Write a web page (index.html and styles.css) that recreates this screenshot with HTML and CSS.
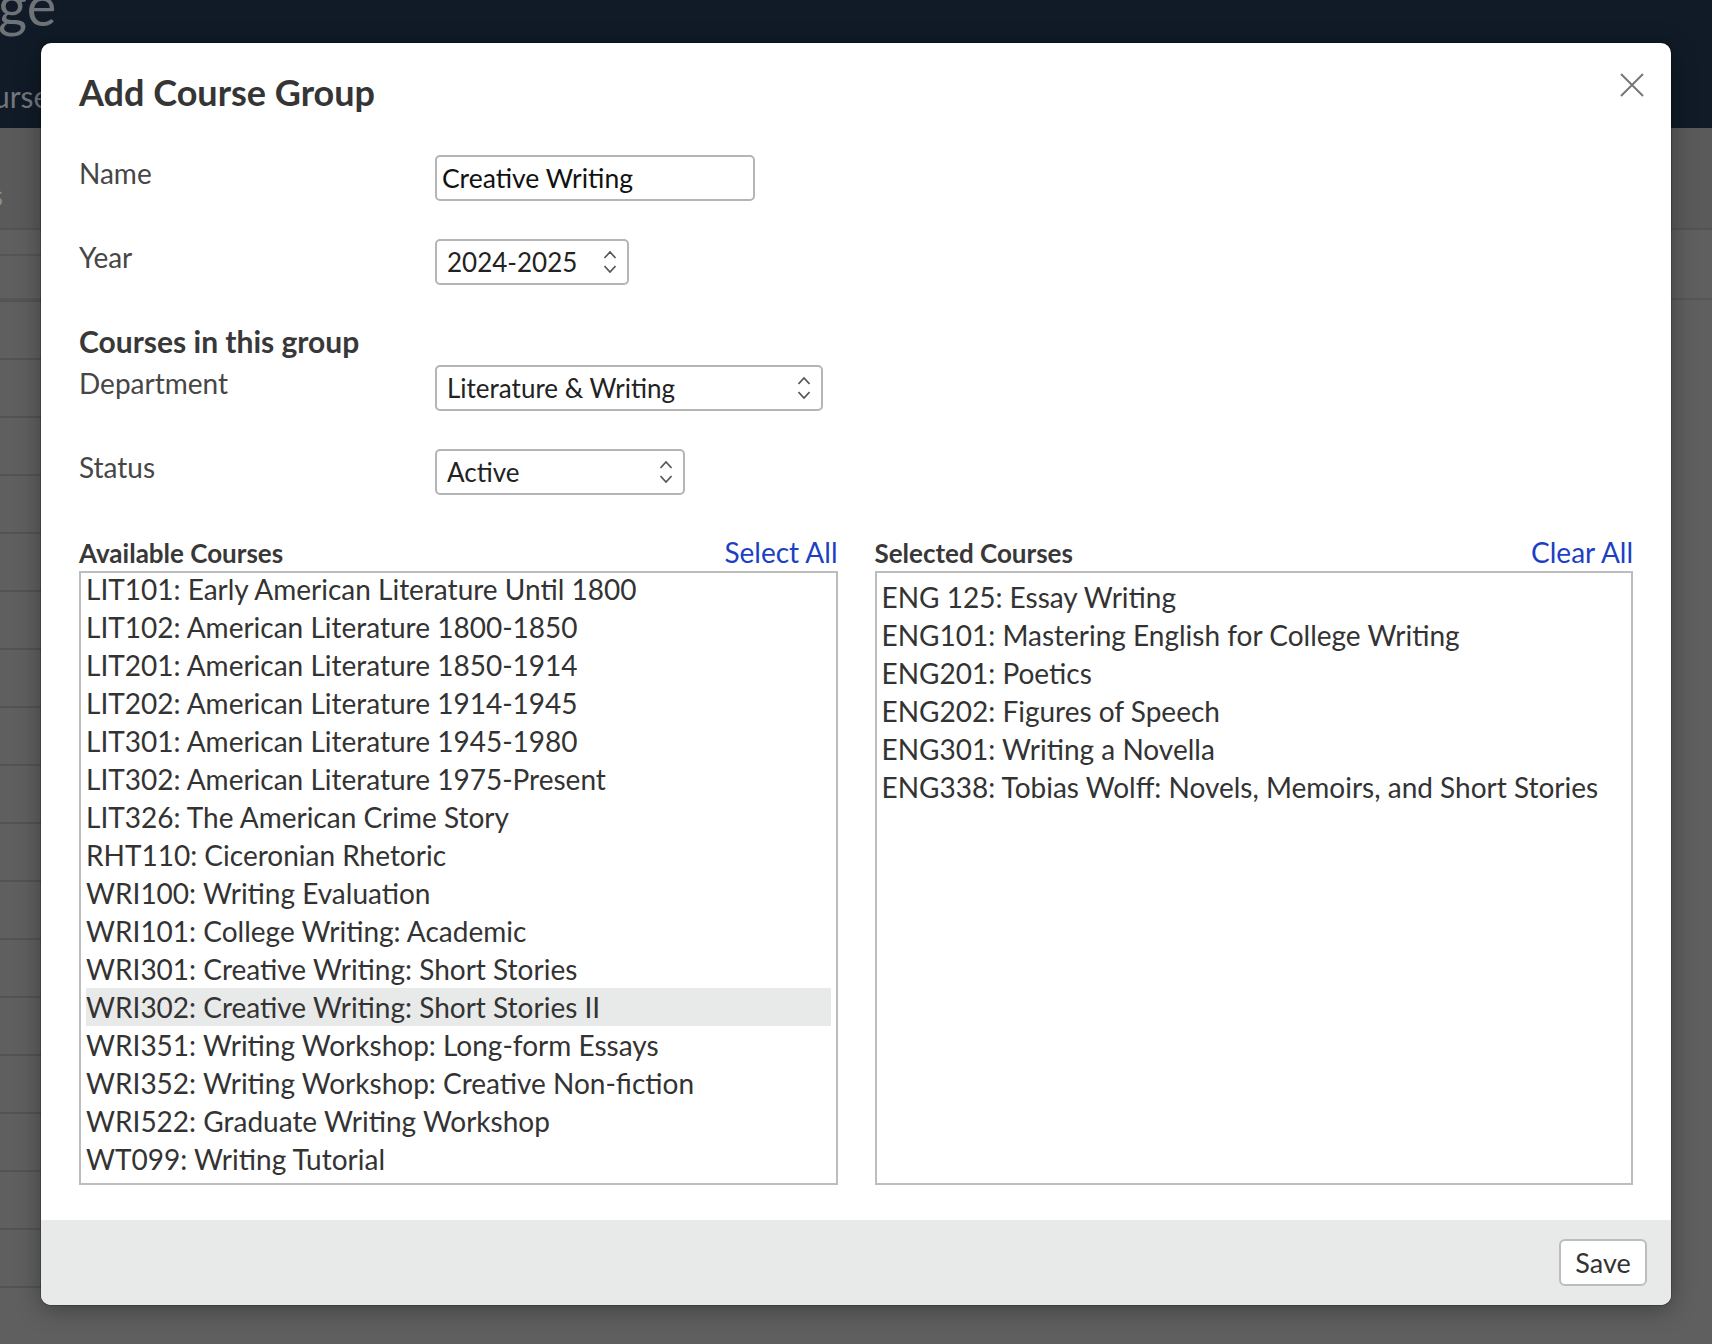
FILE: index.html
```html
<!DOCTYPE html>
<html lang="en">
<head>
<meta charset="utf-8">
<title>Add Course Group</title>
<link rel="stylesheet" href="styles.css">
</head>
<body>
<div class="page">
  <header class="topbar">
    <div class="brand">ge</div>
    <div class="subnav">urse</div>
  </header>
  <main class="content">
    <div class="band-top"><span class="page-s">s</span></div>
    <div class="band-sub"></div>
    <div class="band-mid"></div>
    <div class="rows">
      <div class="row"></div><div class="row"></div><div class="row"></div><div class="row"></div>
      <div class="row"></div><div class="row"></div><div class="row"></div><div class="row"></div>
      <div class="row"></div><div class="row"></div><div class="row"></div><div class="row"></div>
      <div class="row"></div><div class="row"></div><div class="row"></div><div class="row"></div>
      <div class="row"></div><div class="row"></div><div class="row"></div>
    </div>
  </main>
</div>

<div class="modal" role="dialog" aria-labelledby="dlg-title">
  <div class="modal-body">
    <h1 class="modal-title" id="dlg-title">Add Course Group</h1>
    <button class="close" aria-label="Close">
      <svg viewBox="0 0 24 24" width="24" height="24"><path d="M1 1 L23 23 M23 1 L1 23" stroke="#777" stroke-width="2" fill="none"/></svg>
    </button>

    <div class="form-grid">
      <label class="label">Name</label>
      <div><input class="text-input" type="text" value="Creative Writing"></div>
      <label class="label">Year</label>
      <div class="select select-year"><span>2024-2025</span>
        <svg viewBox="0 0 12 24" width="12" height="24"><path d="M0.5 8 L6 2 L11.5 8 M0.5 16 L6 22 L11.5 16" stroke="#555" stroke-width="1.6" fill="none"/></svg>
      </div>
    </div>

    <h2 class="section-title">Courses in this group</h2>

    <div class="form-grid tight">
      <label class="label">Department</label>
      <div class="select select-dept"><span>Literature &amp; Writing</span>
        <svg viewBox="0 0 12 24" width="12" height="24"><path d="M0.5 8 L6 2 L11.5 8 M0.5 16 L6 22 L11.5 16" stroke="#555" stroke-width="1.6" fill="none"/></svg>
      </div>
      <label class="label">Status</label>
      <div class="select select-status"><span>Active</span>
        <svg viewBox="0 0 12 24" width="12" height="24"><path d="M0.5 8 L6 2 L11.5 8 M0.5 16 L6 22 L11.5 16" stroke="#555" stroke-width="1.6" fill="none"/></svg>
      </div>
    </div>

    <div class="lists">
      <section class="list-col">
        <div class="list-head"><h3>Available Courses</h3><a href="#" class="link">Select All</a></div>
        <div class="listbox">
          <ul class="items available">
            <li>LIT101: Early American Literature Until 1800</li>
            <li>LIT102: American Literature 1800-1850</li>
            <li>LIT201: American Literature 1850-1914</li>
            <li>LIT202: American Literature 1914-1945</li>
            <li>LIT301: American Literature 1945-1980</li>
            <li>LIT302: American Literature 1975-Present</li>
            <li>LIT326: The American Crime Story</li>
            <li>RHT110: Ciceronian Rhetoric</li>
            <li>WRI100: Writing Evaluation</li>
            <li>WRI101: College Writing: Academic</li>
            <li>WRI301: Creative Writing: Short Stories</li>
            <li class="hover">WRI302: Creative Writing: Short Stories II</li>
            <li>WRI351: Writing Workshop: Long-form Essays</li>
            <li>WRI352: Writing Workshop: Creative Non-fiction</li>
            <li>WRI522: Graduate Writing Workshop</li>
            <li>WT099: Writing Tutorial</li>
          </ul>
        </div>
      </section>
      <section class="list-col">
        <div class="list-head"><h3>Selected Courses</h3><a href="#" class="link">Clear All</a></div>
        <div class="listbox">
          <ul class="items selected">
            <li>ENG 125: Essay Writing</li>
            <li>ENG101: Mastering English for College Writing</li>
            <li>ENG201: Poetics</li>
            <li>ENG202: Figures of Speech</li>
            <li>ENG301: Writing a Novella</li>
            <li>ENG338: Tobias Wolff: Novels, Memoirs, and Short Stories</li>
          </ul>
        </div>
      </section>
    </div>
  </div>
  <footer class="modal-footer">
    <button class="btn">Save</button>
  </footer>
</div>
</body>
</html>
```

FILE: styles.css
```css
* { box-sizing: border-box; }

html, body {
  margin: 0;
  padding: 0;
  width: 1712px;
  height: 1344px;
  overflow: hidden;
  background: #5f5f5f;
  font-family: Lato, "Open Sans", sans-serif;
}

/* ---------- background page (dimmed) ---------- */
.page {
  width: 1712px;
  height: 1344px;
  display: flex;
  flex-direction: column;
  overflow: hidden;
}

.topbar {
  flex: none;
  height: 128px;
  background: #101b27;
  display: flex;
  flex-direction: column;
  overflow: hidden;
}

.brand {
  font-size: 56px;
  line-height: 56px;
  color: #6f7378;
  margin-top: -23px;
  margin-left: -2px;
}

.subnav {
  font-size: 30px;
  line-height: 34px;
  color: #73777c;
  margin-top: 46px;
  margin-left: -7px;
}

.content {
  flex: 1;
  min-height: 0;
  background: #5f5f5f;
  display: flex;
  flex-direction: column;
}

.band-top {
  flex: none;
  height: 102px;
  border-bottom: 2px solid #535353;
  background: #5a5a5a;
  padding-top: 50px;
}

.page-s {
  display: block;
  font-size: 28px;
  line-height: 34px;
  color: #8a8a8a;
  margin-left: -9px;
}

.band-sub {
  flex: none;
  width: 800px;
  height: 26px;
  border-bottom: 2px solid #555;
}

.band-mid {
  flex: none;
  height: 44px;
  border-bottom: 2px solid #565656;
}

.rows {
  flex: none;
  width: 800px;
  display: flex;
  flex-direction: column;
}

.row {
  flex: none;
  height: 58px;
  border-top: 2px solid #535353;
}

/* ---------- modal ---------- */
.modal {
  position: absolute;
  left: 41px;
  top: 43px;
  width: 1630px;
  height: 1262px;
  background: #fff;
  border-radius: 10px;
  box-shadow: 0 0 0 1px rgba(0, 0, 0, 0.18), 0 4px 24px rgba(0, 0, 0, 0.35);
  display: flex;
  flex-direction: column;
  overflow: hidden;
}

.modal-body {
  flex: 1;
  position: relative;
  padding: 28px 38px 0 38px;
  display: flex;
  flex-direction: column;
}

.modal-title {
  margin: 0;
  font-size: 36px;
  line-height: 42px;
  font-weight: 700;
  color: #353535;
}

.close {
  position: absolute;
  top: 30px;
  right: 27px;
  width: 24px;
  height: 24px;
  padding: 0;
  border: 0;
  background: transparent;
  display: flex;
}

.form-grid {
  display: grid;
  grid-template-columns: 356px 1fr;
  row-gap: 38px;
  align-items: start;
  margin-top: 42px;
}

.form-grid.tight {
  margin-top: 6px;
}

.label {
  font-size: 28px;
  line-height: 32px;
  color: #464646;
  padding-top: 2px;
}

.text-input {
  display: block;
  width: 320px;
  height: 46px;
  border: 2px solid #b5b5b5;
  border-radius: 5px;
  padding: 0 5px;
  font-family: Lato, sans-serif;
  font-size: 26.5px;
  color: #111;
  background: #fff;
  outline: none;
}

.select {
  height: 46px;
  border: 2px solid #b5b5b5;
  border-radius: 5px;
  padding: 0 10px 0 10px;
  display: flex;
  align-items: center;
  justify-content: space-between;
  font-size: 26px;
  color: #222;
  background: #fff;
}

.select svg { flex: none; margin-right: 1px; }

.select-year { width: 194px; }
.select-dept { width: 388px; }
.select-status { width: 250px; }

.section-title {
  margin: 38px 0 0 0;
  font-size: 30px;
  line-height: 36px;
  font-weight: 700;
  color: #383838;
}

.lists {
  display: grid;
  grid-template-columns: 1fr 1fr;
  column-gap: 37px;
  margin-top: 41px;
}

.list-col {
  display: flex;
  flex-direction: column;
}

.list-head {
  display: flex;
  justify-content: space-between;
  align-items: baseline;
  height: 32px;
  margin-bottom: 3px;
}

.list-head h3 {
  margin: 0;
  font-size: 26px;
  line-height: 32px;
  font-weight: 700;
  color: #383838;
}

.link {
  font-size: 28px;
  line-height: 32px;
  color: #1c3fc4;
  text-decoration: none;
}

.listbox {
  height: 614px;
  border: 2px solid #bdbdbd;
  overflow: hidden;
}

.items {
  list-style: none;
  margin: 0;
  padding: 0 5px;
  font-size: 28px;
  line-height: 38px;
  color: #333;
}

.items.available { margin-top: -3px; }
.items.selected { padding-top: 5px; }

.items li { height: 38px; white-space: nowrap; }
.items li.hover { background: #e8e9e9; }

.modal-footer {
  height: 85px;
  flex: none;
  background: #e8e9e9;
  display: flex;
  justify-content: flex-end;
  align-items: center;
  padding-right: 24px;
}

.btn {
  width: 88px;
  height: 47px;
  border: 2px solid #bdbdbd;
  border-radius: 6px;
  background: #fff;
  font-family: Lato, sans-serif;
  font-size: 27px;
  color: #333;
  padding: 0;
}
```
